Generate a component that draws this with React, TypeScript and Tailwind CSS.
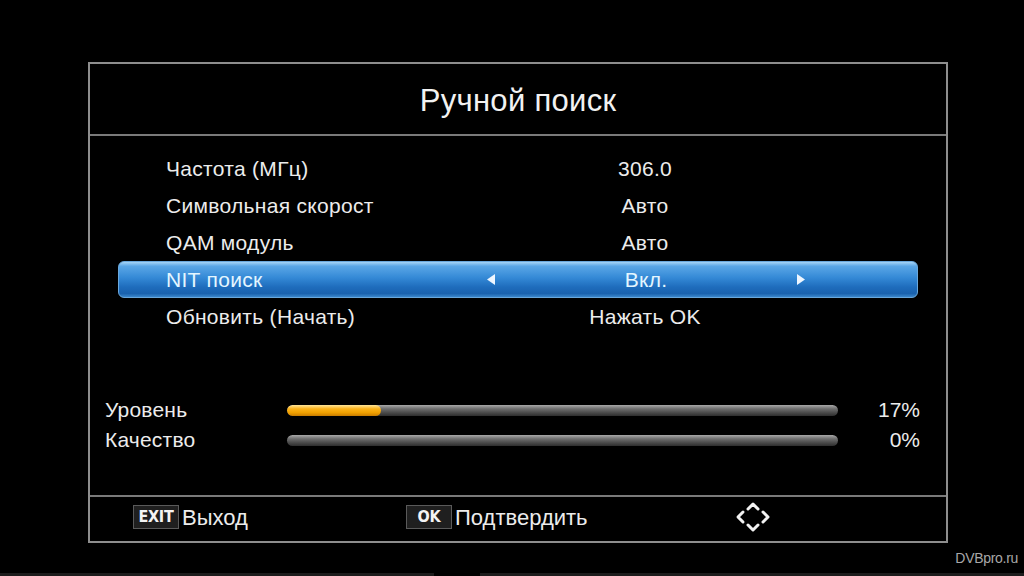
const rows = [
  { label: "Частота (МГц)", value: "306.0" },
  { label: "Символьная скорост", value: "Авто" },
  { label: "QAM модуль", value: "Авто" },
  { label: "NIT поиск", value: "Вкл.", active: true },
  { label: "Обновить (Начать)", value: "Нажать OK" },
];

const signals = [
  { label: "Уровень", pct: 17 },
  { label: "Качество", pct: 0 },
];

const NavIcon = () => (
  <svg width="36" height="30" viewBox="0 0 36 30" fill="none" stroke="#f2f2f2" strokeWidth="3" strokeLinecap="round" strokeLinejoin="round">
    <path d="M13 7 L18 2 L23 7" />
    <path d="M13 23 L18 28 L23 23" />
    <path d="M8 10 L3 15 L8 20" />
    <path d="M28 10 L33 15 L28 20" />
  </svg>
);

const Key = ({ children }: { children: React.ReactNode }) => (
  <span className="h-[24px] min-w-[46px] px-[4px] flex items-center justify-center bg-[#1f1f1f] border border-[#5a5a5a] text-[16px] font-bold tracking-[-0.3px] text-[#f4f4f4] [font-family:'DejaVu_Sans_Condensed','DejaVu_Sans',sans-serif]">
    {children}
  </span>
);

export default function App() {
  return (
    <div className="w-[1024px] h-[576px] bg-black flex flex-col overflow-hidden [font-family:'Liberation_Sans',Arial,sans-serif] text-[#ececec]">
      <div className="pt-[62px] pl-[88px]">
        <div className="w-[860px] h-[481px] border-2 border-[#8e8e8e] flex flex-col">
          {/* title */}
          <div className="h-[72px] border-b-2 border-[#7a7a7a] flex items-center justify-center pt-[4px]">
            <h1 className="text-[31px] text-[#f2f2f2] tracking-[0.3px]">Ручной поиск</h1>
          </div>

          {/* menu */}
          <div className="pt-[14px] pl-[28px]">
            {rows.map((r) =>
              r.active ? (
                <div
                  key={r.label}
                  className="w-[800px] h-[37px] flex items-center rounded-[6px] border border-[#6aa8dc] bg-[linear-gradient(to_bottom,#a6d4f6_0%,#5aa6e6_12%,#3489d6_45%,#1e6cbc_72%,#1a62ae_90%,#3a86cc_100%)] text-[#e4f6ff]"
                >
                  <span className="w-[362px] pl-[47px] text-[21px] tracking-[0.3px]">{r.label}</span>
                  <span className="w-[330px] flex items-center justify-between px-[5px] text-[21px] tracking-[0.3px]">
                    <svg width="10" height="11" viewBox="0 0 10 11"><path d="M9 0 L1 5.5 L9 11 Z" fill="#eef6ff" /></svg>
                    <span>{r.value}</span>
                    <svg width="10" height="11" viewBox="0 0 10 11"><path d="M1 0 L9 5.5 L1 11 Z" fill="#eef6ff" /></svg>
                  </span>
                </div>
              ) : (
                <div key={r.label} className="w-[800px] h-[37px] flex items-center text-[21px] tracking-[0.3px]">
                  <span className="w-[362px] pl-[48px]">{r.label}</span>
                  <span className="w-[330px] text-center">{r.value}</span>
                </div>
              )
            )}
          </div>

          {/* signal */}
          <div className="mt-[60px]">
            {signals.map((s) => (
              <div key={s.label} className="h-[30px] flex items-center">
                <span className="w-[197px] pl-[15px] text-[21px] tracking-[0.2px]">{s.label}</span>
                <div className="w-[551px] h-[11px] rounded-full bg-[linear-gradient(to_bottom,#a8a8a8_0%,#6e6e6e_35%,#4a4a4a_70%,#2e2e2e_100%)] overflow-hidden">
                  <div
                    className="h-full rounded-full bg-[linear-gradient(to_bottom,#ffe59a_0%,#fbb21a_35%,#f0a000_70%,#c87c00_100%)]"
                    style={{ width: `${s.pct}%` }}
                  />
                </div>
                <span className="w-[82px] text-right text-[21px]">{s.pct}%</span>
              </div>
            ))}
          </div>

          <div className="flex-1" />

          {/* footer */}
          <div className="h-[46px] border-t-2 border-[#7a7a7a] flex items-center pl-[43px] pb-[4px]">
            <div className="w-[273px] flex items-center gap-[3px]">
              <Key>EXIT</Key>
              <span className="text-[22px]">Выход</span>
            </div>
            <div className="w-[329px] flex items-center gap-[3px]">
              <Key>OK</Key>
              <span className="text-[22px]">Подтвердить</span>
            </div>
            <NavIcon />
          </div>
        </div>
      </div>

      <div className="flex-1 flex items-center justify-end pr-[6px]">
        <span className="text-[14px] text-[#a8a8a8] tracking-[-0.3px]">DVBpro.ru</span>
      </div>
      <div className="h-[3px] flex bg-[#1c1c1c]">
        <div className="ml-[434px] w-[46px] bg-black" />
      </div>
    </div>
  );
}
